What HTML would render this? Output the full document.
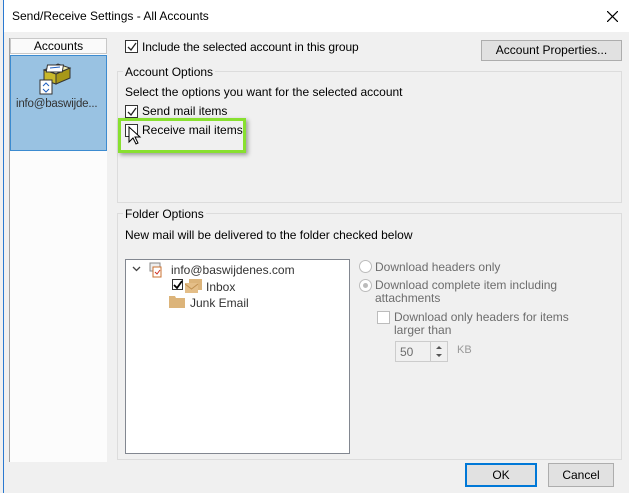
<!DOCTYPE html><html><head><style>
*{box-sizing:border-box;margin:0;padding:0}
body{width:629px;height:493px;overflow:hidden;background:#f0f0f0;font-family:"Liberation Sans",sans-serif;font-size:11.5px;color:#000;position:relative}
.a{position:absolute;white-space:nowrap}
.cb{position:absolute;width:13px;height:13px;border:1px solid #333;background:#fff}
.grp{position:absolute;border:1px solid #dcdcdc}
.lg{position:absolute;background:#f0f0f0;padding:0 2px;font-size:12px}
.btn{position:absolute;background:#e1e1e1;border:1px solid #adadad;text-align:center;font-size:12px}
.dis{color:#6d6d6d}
</style></head><body>
<div class="a" style="left:3px;top:0;width:1px;height:493px;background:#2b79d0"></div>
<div class="a" style="left:4px;top:0;width:625px;height:32px;background:#fff"></div>
<div class="a" style="left:12px;top:9px;font-size:12px">Send/Receive Settings - All Accounts</div>
<svg class="a" style="left:607px;top:11px" width="11" height="11"><path d="M0 0L11 11M11 0L0 11" stroke="#000" stroke-width="1.2"/></svg>

<div class="a" style="left:9px;top:38px;width:98px;height:424px;background:#fcfcfc;border-left:1px solid #a0a0a0"></div>
<div class="a" style="left:10px;top:38px;width:97px;height:16px;background:#fafafa;border:1px solid #c8c8c8;text-align:center;font-size:12px;line-height:14px">Accounts</div>
<div class="a" style="left:10px;top:55px;width:97px;height:96px;background:#99c2e2;border:1px solid #3c8bd0"></div>
<svg class="a" style="left:36px;top:62px" width="38" height="34">
<polygon points="8,8 22,2 34,6 20,12" fill="#f4f0b0" stroke="#333"/>
<polygon points="8,8 20,12 20,22 8,18" fill="#c8b82a" stroke="#333"/>
<polygon points="20,12 34,6 34,16 20,22" fill="#a89818" stroke="#333"/>
<rect x="12" y="3" width="16" height="7" fill="#fff" stroke="#333" transform="skewX(-10)"/>
<line x1="14" y1="6" x2="24" y2="5" stroke="#2060c0"/>
<rect x="4" y="18" width="12" height="14" fill="#fff" stroke="#333"/>
<path d="M7 24l3-3 3 3M7 27l3 3 3-3" stroke="#2060c0" fill="none"/>
</svg>
<div class="a" style="left:16px;top:98px;font-size:11.5px;color:#333;letter-spacing:-0.2px">info@baswijde...</div>

<div class="cb" style="left:125px;top:40px"></div>
<svg class="a" style="left:126px;top:41px" width="11" height="11"><path d="M2 6l3 3 5-7" stroke="#222" fill="none" stroke-width="1.3"/></svg>
<div class="a" style="left:142px;top:40px;font-size:12px;letter-spacing:-0.1px">Include the selected account in this group</div>
<div class="btn" style="left:481px;top:40px;width:141px;height:21px;line-height:19px">Account Properties...</div>

<div class="grp" style="left:117px;top:71px;width:505px;height:132px"></div>
<div class="lg" style="left:123px;top:65px">Account Options</div>
<div class="a" style="left:125px;top:85px;font-size:12px">Select the options you want for the selected account</div>
<div class="cb" style="left:125px;top:105px"></div>
<svg class="a" style="left:126px;top:106px" width="11" height="11"><path d="M2 6l3 3 5-7" stroke="#222" fill="none" stroke-width="1.3"/></svg>
<div class="a" style="left:142px;top:104px;font-size:12px">Send mail items</div>
<div class="a" style="left:118px;top:118px;width:128px;height:35px;border:3px solid #88e030;box-shadow:2px 2px 4px rgba(0,0,0,.35)"></div>
<div class="cb" style="left:125px;top:124px"></div>
<div class="a" style="left:142px;top:123px;font-size:12px">Receive mail items</div>
<svg class="a" style="left:128px;top:126px" width="14" height="20"><path d="M1 1L1 16L5 12L8 18L10 17L7 11L12 11Z" fill="#fff" stroke="#000"/></svg>

<div class="grp" style="left:117px;top:213px;width:505px;height:247px"></div>
<div class="lg" style="left:123px;top:207px">Folder Options</div>
<div class="a" style="left:125px;top:228px;font-size:12px">New mail will be delivered to the folder checked below</div>
<div class="a" style="left:125px;top:259px;width:225px;height:195px;background:#fff;border:1px solid #828790"></div>
<svg class="a" style="left:132px;top:266px" width="9" height="6"><path d="M1 1l3.5 3.5L8 1" stroke="#444" fill="none" stroke-width="1.3"/></svg>
<svg class="a" style="left:149px;top:262px" width="16" height="16"><rect x="1" y="1" width="10" height="8" fill="#eee" stroke="#888"/><rect x="4" y="5" width="8" height="10" fill="#fff" stroke="#c87030"/><path d="M6 10l2 2 3-4" stroke="#d03020" fill="none"/></svg>
<div class="a" style="left:171px;top:263px;font-size:12px;color:#333">info@baswijdenes.com</div>
<div class="cb" style="left:172px;top:279px;width:11px;height:11px"></div>
<svg class="a" style="left:173px;top:280px" width="10" height="10"><path d="M1 5l3 3 5-7" stroke="#000" fill="none" stroke-width="1.8"/></svg>
<svg class="a" style="left:185px;top:278px" width="18" height="15"><rect x="4" y="1" width="13" height="11" fill="#dcb47a"/><rect x="0" y="5" width="13" height="10" fill="#e4be88"/><path d="M0 6l6.5 5L13 6" stroke="#c09050" fill="none"/></svg>
<div class="a" style="left:206px;top:280px;font-size:12px;color:#333">Inbox</div>
<svg class="a" style="left:169px;top:294px" width="16" height="14"><path d="M0 2h6l1 2h9v10H0Z" fill="#dcb47a"/></svg>
<div class="a" style="left:190px;top:296px;font-size:12px;color:#333">Junk Email</div>

<div class="a" style="left:359px;top:260px;width:13px;height:13px;border-radius:50%;border:1px solid #bcbcbc;background:#fff"></div>
<div class="a dis" style="left:375px;top:260px;font-size:12px">Download headers only</div>
<div class="a" style="left:359px;top:279px;width:13px;height:13px;border-radius:50%;border:1px solid #bcbcbc;background:#fff"></div>
<div class="a" style="left:363px;top:283px;width:5px;height:5px;border-radius:50%;background:#bcbcbc"></div>
<div class="a dis" style="left:375px;top:279px;font-size:12px;line-height:13px">Download complete item including<br>attachments</div>
<div class="a" style="left:377px;top:311px;width:13px;height:13px;border:1px solid #bcbcbc;background:#fff"></div>
<div class="a dis" style="left:394px;top:311px;font-size:12px;line-height:13px">Download only headers for items<br>larger than</div>
<div class="a" style="left:395px;top:341px;width:53px;height:21px;border:1px solid #ccc;background:#f0f0f0"></div>
<div class="a dis" style="left:400px;top:345px;font-size:12px">50</div>
<div class="a" style="left:430px;top:342px;width:17px;height:19px;border-left:1px solid #ccc"></div>
<svg class="a" style="left:434px;top:344px" width="10" height="16"><path d="M2 5h6L5 2Z M2 10h6L5 13Z" fill="#555"/></svg>
<div class="a dis" style="left:457px;top:344px;font-size:11px;color:#999">KB</div>

<div class="btn" style="left:465px;top:463px;width:72px;height:24px;line-height:21px;border:2px solid #0078d7">OK</div>
<div class="btn" style="left:548px;top:463px;width:66px;height:24px;line-height:22px">Cancel</div>
</body></html>
